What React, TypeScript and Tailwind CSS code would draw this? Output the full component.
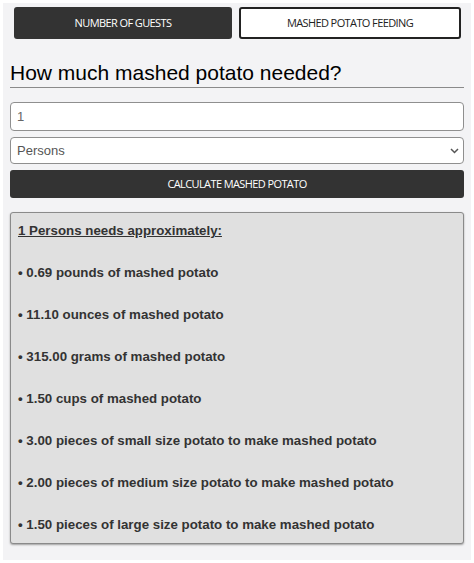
import React from 'react';

const results = [
  '0.69 pounds of mashed potato',
  '11.10 ounces of mashed potato',
  '315.00 grams of mashed potato',
  '1.50 cups of mashed potato',
  '3.00 pieces of small size potato to make mashed potato',
  '2.00 pieces of medium size potato to make mashed potato',
  '1.50 pieces of large size potato to make mashed potato',
];

export default function App() {
  return (
    <div className="min-h-screen bg-white p-[3px]">
      <div className="bg-[#f3f3f5] px-[7px] pt-[4px] pb-[14px] min-h-[557px]">
        {/* tabs */}
        <div className="flex gap-[7px] ml-[4px] mr-[3px] font-[family-name:'Open_Sans',sans-serif] text-[11px] tracking-[-0.6px]">
          <button className="flex-1 h-[32px] rounded-[3px] bg-[#333333] text-white uppercase">
            Number of guests
          </button>
          <button className="flex-1 h-[32px] rounded-[3px] border-2 border-[#222] bg-white text-[#222] uppercase">
            Mashed potato feeding
          </button>
        </div>

        <h1 className="mt-[21px] pb-[2px] border-b border-[#8a8a8a] font-[family-name:'Liberation_Sans',Arial,sans-serif] text-[21px] leading-[25px] text-black">
          How much mashed potato needed?
        </h1>

        <div className="mt-[14px] flex flex-col gap-[6px] font-[family-name:'Liberation_Sans',Arial,sans-serif] text-[13px]">
          <input
            defaultValue="1"
            className="h-[29px] w-full rounded-[4px] border border-[#8f8f8f] bg-white px-[6px] text-[#666]"
          />
          <div className="relative">
            <select className="h-[27px] w-full appearance-none rounded-[4px] border border-[#8f8f8f] bg-white px-[6px] text-[#555]">
              <option>Persons</option>
            </select>
            <svg
              className="pointer-events-none absolute right-[5px] top-[11px]"
              width="9"
              height="6"
              viewBox="0 0 9 6"
            >
              <path d="M1 1l3.5 3.5L8 1" fill="none" stroke="#555" strokeWidth="1.5" />
            </svg>
          </div>
          <button className="h-[28px] w-full rounded-[3px] bg-[#333333] font-[family-name:'Open_Sans',sans-serif] text-[11px] tracking-[-0.6px] text-white uppercase">
            Calculate mashed potato
          </button>
        </div>

        <div className="mt-[14px] rounded-[3px] border border-[#8a8a8a] bg-[#e0e0e0] px-[7px] pt-[8px] pb-[8px] shadow-[0_1px_2px_rgba(0,0,0,0.35)] font-[family-name:'Liberation_Sans',Arial,sans-serif] text-[13.3px] font-bold text-[#333]">
          <p className="leading-5 underline">1 Persons needs approximately:</p>
          {results.map((r) => (
            <p key={r} className="mt-[22px] leading-5">
              • {r}
            </p>
          ))}
        </div>
      </div>
    </div>
  );
}
